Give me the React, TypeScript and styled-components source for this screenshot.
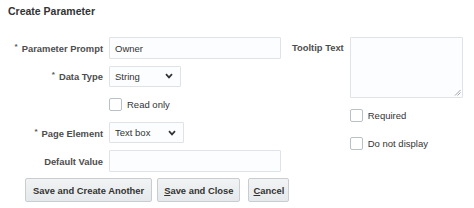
import React from 'react'
import styled, { createGlobalStyle } from 'styled-components'

const GlobalStyle = createGlobalStyle`
  html, body {
    margin: 0;
    padding: 0;
    background: #ffffff;
  }
  body {
    font-family: 'Liberation Sans', Arial, sans-serif;
    color: #333333;
  }
`

const Page = styled.div`
  width: 474px;
  height: 208px;
  padding: 4px 8px 0 8px;
  box-sizing: border-box;
`

const Title = styled.h1`
  margin: 0;
  font-size: 10.5px;
  line-height: 14px;
  font-weight: bold;
  color: #333333;
`

const Body = styled.div`
  display: flex;
  align-items: flex-start;
  gap: 11px;
  margin-top: 19px;
`

const FieldGrid = styled.div`
  display: grid;
  grid-template-columns: 95px auto;
  grid-template-rows: repeat(5, 22px);
  column-gap: 6px;
  row-gap: 6.25px;
  align-items: center;
`

const Label = styled.label`
  font-size: 9.4px;
  font-weight: bold;
  color: #4d4d4d;
  text-align: right;
  white-space: nowrap;
`

const Star = styled.span`
  font-size: 8px;
  vertical-align: 3px;
  margin-right: 4px;
  color: #555555;
`

const TextInput = styled.input<{ $width: number }>`
  box-sizing: border-box;
  width: ${(p) => p.$width}px;
  height: 22px;
  border: 1px solid #dfe3e7;
  border-radius: 1px;
  background: #fcfdfe;
  padding: 0 5px;
  font-family: 'Liberation Sans', Arial, sans-serif;
  font-size: 9.5px;
  color: #333333;
  outline: none;
`

const Select = styled.div<{ $width: number }>`
  box-sizing: border-box;
  width: ${(p) => p.$width}px;
  height: 21px;
  border: 1px solid #dfe3e7;
  border-radius: 1px;
  background: #fcfdfe;
  padding: 0 7px 0 5px;
  display: flex;
  align-items: center;
  justify-content: space-between;
  font-size: 9.5px;
  color: #333333;
`

const CheckRow = styled.div`
  display: flex;
  align-items: center;
  gap: 5px;
  font-size: 9.5px;
  color: #333333;
`

const Box = styled.span`
  box-sizing: border-box;
  display: inline-block;
  width: 13px;
  height: 13px;
  border: 1px solid #b9c0c6;
  border-radius: 2px;
  background: #ffffff;
`

const SideGrid = styled.div`
  display: grid;
  grid-template-columns: auto 113px;
  column-gap: 6px;
  row-gap: 15px;
  align-items: start;
`

const SideLabel = styled(Label)`
  padding-top: 5px;
`

const TextArea = styled.div`
  position: relative;
  box-sizing: border-box;
  height: 61px;
  border: 1px solid #dfe3e7;
  border-radius: 1px;
  background: #fcfdfe;
`

const Grip = styled.svg`
  position: absolute;
  right: 1px;
  bottom: 1px;
`

const SideChecks = styled.div`
  grid-column: 2;
  display: flex;
  flex-direction: column;
  gap: 15px;
  margin-top: -4px;
`

const Buttons = styled.div`
  display: flex;
  gap: 5px;
  margin-top: 6px;
  padding-left: 17px;
`

const Button = styled.button<{ $pad: number; $space?: number }>`
  box-sizing: border-box;
  height: 24px;
  margin-left: ${(p) => p.$space ?? 0}px;
  padding: 0 ${(p) => p.$pad}px;
  border: 1px solid #c9cdd1;
  border-radius: 2px;
  background: linear-gradient(#f1f3f4, #e6e9eb);
  font-family: 'Liberation Sans', Arial, sans-serif;
  font-size: 9.4px;
  font-weight: bold;
  color: #333333;
  cursor: pointer;

  u {
    text-decoration: underline;
  }
`

const Chevron = () => (
  <svg width="8" height="6" viewBox="0 0 8 6">
    <path d="M1 1.2 L4 4.4 L7 1.2" fill="none" stroke="#333" strokeWidth="1.7" />
  </svg>
)

export default function App() {
  return (
    <Page>
      <GlobalStyle />
      <Title>Create Parameter</Title>
      <Body>
        <FieldGrid>
          <Label>
            <Star>*</Star>Parameter Prompt
          </Label>
          <TextInput $width={172} defaultValue="Owner" />

          <Label>
            <Star>*</Star>Data Type
          </Label>
          <Select $width={72}>
            String
            <Chevron />
          </Select>

          <span />
          <CheckRow>
            <Box />
            Read only
          </CheckRow>

          <Label>
            <Star>*</Star>Page Element
          </Label>
          <Select $width={75}>
            Text box
            <Chevron />
          </Select>

          <Label>Default Value</Label>
          <TextInput $width={172} defaultValue="" />
        </FieldGrid>

        <SideGrid>
          <SideLabel>Tooltip Text</SideLabel>
          <TextArea>
            <Grip width="7" height="7" viewBox="0 0 7 7">
              <path d="M6.5 1 L1 6.5 M6.5 3.5 L3.5 6.5" stroke="#8a8f94" strokeWidth="0.8" />
            </Grip>
          </TextArea>
          <SideChecks>
            <CheckRow>
              <Box />
              Required
            </CheckRow>
            <CheckRow>
              <Box />
              Do not display
            </CheckRow>
          </SideChecks>
        </SideGrid>
      </Body>
      <Buttons>
        <Button $pad={7}>Save and Create Another</Button>
        <Button $pad={6}>
          <u>S</u>ave and Close
        </Button>
        <Button $pad={4} $space={3}>
          <u>C</u>ancel
        </Button>
      </Buttons>
    </Page>
  )
}
